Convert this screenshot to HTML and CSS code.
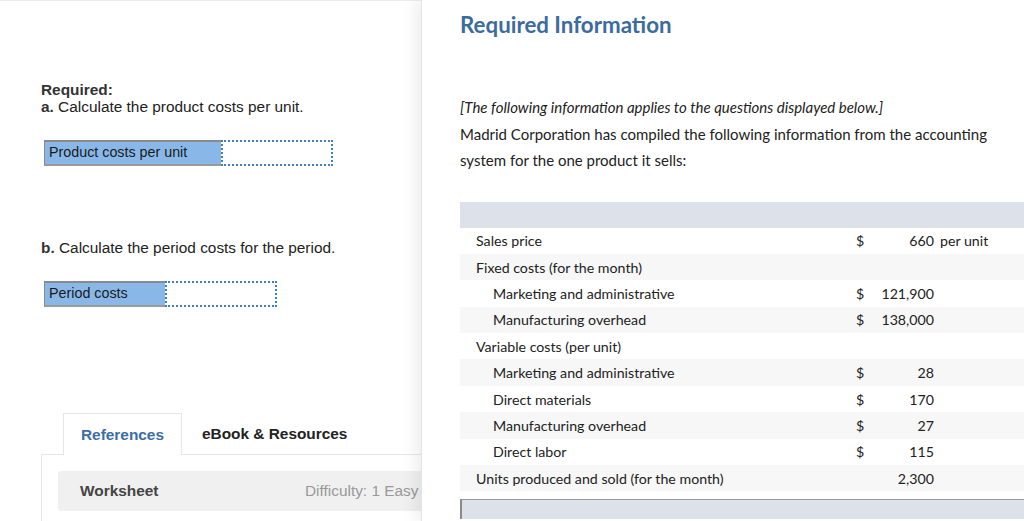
FILE: index.html
```
<!DOCTYPE html>
<html>
<head>
<meta charset="utf-8">
<link rel="stylesheet" href="styles.css">
</head>
<body>
<div class="page">
  <div class="left">
    <div class="q">
      <div class="req">Required:</div>
      <div class="qtext"><b>a.</b> Calculate the product costs per unit.</div>
      <div class="answer">
        <div class="lbl lbl-a">Product costs per unit</div>
        <div class="inp"></div>
      </div>
      <div class="qtext qb"><b>b.</b> Calculate the period costs for the period.</div>
      <div class="answer">
        <div class="lbl lbl-b">Period costs</div>
        <div class="inp"></div>
      </div>
    </div>
    <div class="tabs">
      <div class="tab active">References</div>
      <div class="tab">eBook &amp; Resources</div>
    </div>
    <div class="tabpanel">
      <div class="wsbar">
        <span class="ws">Worksheet</span>
        <span class="diff">Difficulty: 1 Easy</span>
      </div>
    </div>
  </div>
  <div class="right">
    <h2 class="title">Required Information</h2>
    <p class="intro"><i>[The following information applies to the questions displayed below.]</i><br>Madrid Corporation has compiled the following information from the accounting system for the one product it sells:</p>
    <table class="data">
      <tr class="head"><td></td><td></td><td></td><td></td></tr>
      <tr><td class="l">Sales price</td><td class="d">$</td><td class="a">660</td><td class="u">per unit</td></tr>
      <tr class="alt"><td class="l">Fixed costs (for the month)</td><td></td><td></td><td></td></tr>
      <tr><td class="l ind">Marketing and administrative</td><td class="d">$</td><td class="a">121,900</td><td></td></tr>
      <tr class="alt"><td class="l ind">Manufacturing overhead</td><td class="d">$</td><td class="a">138,000</td><td></td></tr>
      <tr><td class="l">Variable costs (per unit)</td><td></td><td></td><td></td></tr>
      <tr class="alt"><td class="l ind">Marketing and administrative</td><td class="d">$</td><td class="a">28</td><td></td></tr>
      <tr><td class="l ind">Direct materials</td><td class="d">$</td><td class="a">170</td><td></td></tr>
      <tr class="alt"><td class="l ind">Manufacturing overhead</td><td class="d">$</td><td class="a">27</td><td></td></tr>
      <tr><td class="l ind">Direct labor</td><td class="d">$</td><td class="a">115</td><td></td></tr>
      <tr class="alt"><td class="l">Units produced and sold (for the month)</td><td></td><td class="a">2,300</td><td></td></tr>
    </table>
    <div class="footbar"></div>
  </div>
</div>
</body>
</html>
```
FILE: styles.css
```
html, body {
  margin: 0;
  padding: 0;
  background: #fff;
}
.page {
  display: flex;
  width: 1024px;
  height: 521px;
  overflow: hidden;
}
.left {
  width: 421px;
  flex: none;
  border-top: 1px solid #ececec;
  font-family: "Liberation Sans", Arial, sans-serif;
  color: #222;
  overflow: hidden;
  box-sizing: border-box;
}
.q {
  padding: 80px 0 0 41px;
}
.req {
  font-weight: bold;
  font-size: 15.4px;
  line-height: 17px;
  color: #333;
}
.qtext {
  font-size: 15.4px;
  line-height: 17px;
  color: #222;
}
.qtext b { color: #333; }
.qb {
  margin-top: 73px;
}
.answer {
  display: flex;
  margin: 25px 0 0 3px;
  height: 26px;
}
.lbl {
  box-sizing: border-box;
  background: #89b8e8;
  border-top: 2px solid #8a8a8a;
  border-bottom: 2px solid #9a9a9a;
  border-left: 1px solid #8a8a8a;
  font-size: 14.3px;
  line-height: 21px;
  padding-left: 4px;
  color: #1a1a1a;
}
.lbl-a { width: 177px; }
.lbl-b { width: 121px; }
.inp {
  box-sizing: border-box;
  width: 112px;
  border: 2px dotted #3d80c8;
  background: #fff;
}
.tabs {
  display: flex;
  margin: 106px 0 0 63px;
  height: 41px;
}
.tab {
  font-size: 15.4px;
  font-weight: bold;
  color: #222;
  line-height: 41px;
  padding: 0 17px 0 20px;
  box-sizing: border-box;
}
.tab.active {
  color: #3a6ea5;
  width: 119px;
  padding: 0 0 0 17px;
  border: 1px solid #e6e6e6;
  border-bottom: none;
  background: #fff;
  position: relative;
  z-index: 1;
  height: 42px;
}
.tabpanel {
  margin-left: 41px;
  border-top: 1px solid #e6e6e6;
  border-left: 1px solid #e6e6e6;
  padding: 16px 0 0 16px;
  height: 80px;
}
.wsbar {
  display: flex;
  align-items: center;
  height: 40px;
  background: #f0f0f0;
  border-radius: 3px;
  width: 420px;
  font-size: 15.4px;
}
.ws {
  font-weight: bold;
  color: #444;
  padding-left: 22px;
  width: 225px;
}
.diff {
  color: #999;
  white-space: nowrap;
}
.right {
  flex: 1;
  min-width: 0;
  overflow: hidden;
  border-left: 1px solid #e4e4e4;
  box-shadow: -6px 0 14px rgba(0,0,0,0.07);
  padding-left: 38px;
  font-family: Lato, "Open Sans", sans-serif;
  color: #222;
  position: relative;
}
.title {
  margin: 12px 0 0;
  font-size: 22.3px;
  font-weight: bold;
  color: #3c6b9f;
  line-height: 26px;
}
.intro {
  margin: 56px 0 0;
  font-size: 15px;
  line-height: 26.5px;
  width: 545px;
}
.data {
  border-collapse: collapse;
  margin-top: 28px;
  width: 600px;
  font-size: 14.2px;
}
.data td {
  height: 26.4px;
  padding: 0;
  white-space: nowrap;
}
.data tr.head td {
  background: #dde1ea;
  height: 26px;
}
.data tr.alt td {
  background: #f7f7f7;
}
.data td.l {
  width: 376px;
  padding-left: 16px;
}
.data td.l.ind {
  padding-left: 33px;
  width: 359px;
}
.data td.d {
  width: 16px;
  padding-left: 4px;
}
.data td.a {
  width: 62px;
  text-align: right;
}
.data td.u {
  padding-left: 6px;
}
.footbar {
  margin-top: 8px;
  height: 20px;
  width: 600px;
  background: #dde1ea;
  border-top: 1px solid #9a9a9a;
  border-left: 2px solid #8a8a8a;
  box-sizing: border-box;
}
```
